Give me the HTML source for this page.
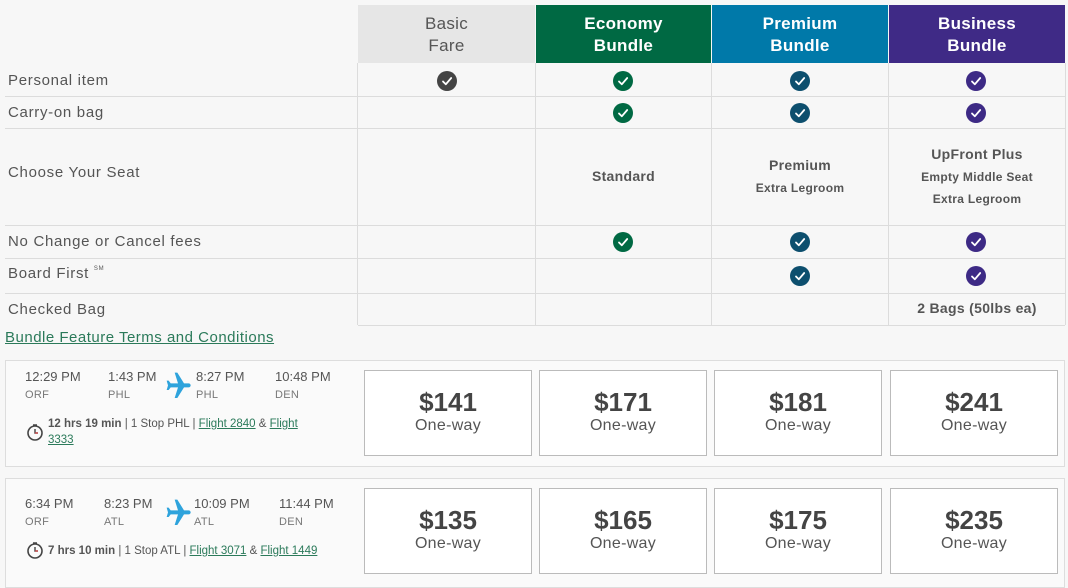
<!DOCTYPE html>
<html><head><meta charset="utf-8"><style>
*{margin:0;padding:0;box-sizing:border-box}
body{width:1068px;height:578px;background:#f7f7f7;font-family:"Liberation Sans",sans-serif;color:#444;position:relative;overflow:hidden}
.a{position:absolute}
.hd{position:absolute;top:5px;height:58px;text-align:center;font-weight:bold;font-size:17px;line-height:22px;padding-top:8px;color:#fff;letter-spacing:.3px}
.lbl{position:absolute;left:8px;font-size:15px;color:#555;letter-spacing:.7px}
.hl{position:absolute;left:5px;width:1060px;height:1px;background:#dcdcdc}
.vl{position:absolute;top:63px;height:262px;width:1px;background:#dcdcdc}
.ck{position:absolute;width:20px;height:20px}
.ct{position:absolute;text-align:center;font-weight:bold;color:#555;letter-spacing:.3px}
.card{position:absolute;left:5px;width:1060px;background:#fafafa;border:1px solid #ddd}
.pb{position:absolute;width:168px;height:86px;border:1px solid #bbb;background:#fff;text-align:center}
.pb b{display:block;font-size:26px;color:#444;margin-top:16px;line-height:30px}
.pb span{display:block;font-size:16px;color:#555;letter-spacing:.3px}
.t{position:absolute;font-size:13px;color:#555}
.c{position:absolute;font-size:11px;color:#777;letter-spacing:.3px}
.info{position:absolute;font-size:11.5px;color:#555;line-height:16px}
.info a{color:#2b7a5a;text-decoration:underline}
</style></head><body>
<div class="hd" style="left:358px;width:177px;background:#e6e6e6;color:#555;font-weight:normal">Basic<br>Fare</div>
<div class="hd" style="left:536px;width:175px;background:#006943">Economy<br>Bundle</div>
<div class="hd" style="left:712px;width:176px;background:#0079a9">Premium<br>Bundle</div>
<div class="hd" style="left:889px;width:176px;background:#3f2a86">Business<br>Bundle</div>

<div class="a" style="left:358px;top:63px;width:707px;height:262px;background:#f7f7f7"></div>
<div class="hl" style="top:96px"></div><div class="hl" style="top:128px"></div><div class="hl" style="top:225px"></div><div class="hl" style="top:258px"></div><div class="hl" style="top:293px"></div><div class="hl" style="top:325px;left:358px;width:707px"></div>
<div class="vl" style="left:357px"></div><div class="vl" style="left:535px"></div><div class="vl" style="left:711px"></div><div class="vl" style="left:888px"></div><div class="vl" style="left:1065px"></div>

<div class="lbl" style="top:72px">Personal item</div>
<div class="lbl" style="top:104px">Carry-on bag</div>
<div class="lbl" style="top:164px">Choose Your Seat</div>
<div class="lbl" style="top:233px">No Change or Cancel fees</div>
<div class="lbl" style="top:265px">Board First <sup style="font-size:6px;vertical-align:8px">SM</sup></div>
<div class="lbl" style="top:301px">Checked Bag</div>
<div class="a" style="left:5px;top:329px;font-size:15px;color:#2b7a5a;text-decoration:underline;letter-spacing:.5px">Bundle Feature Terms and Conditions</div>

<svg width="0" height="0" style="position:absolute"><defs><symbol id="k" viewBox="0 0 20 20"><path d="M6 10.5l2.8 2.8L14.2 7" fill="none" stroke="#fff" stroke-width="1.8" stroke-linecap="round" stroke-linejoin="round"/></symbol></defs></svg>
<svg class="ck" style="left:437px;top:71px" viewBox="0 0 20 20"><circle cx="10" cy="10" r="10" fill="#444"/><use href="#k"/></svg>
<svg class="ck" style="left:613px;top:71px" viewBox="0 0 20 20"><circle cx="10" cy="10" r="10" fill="#006943"/><use href="#k"/></svg>
<svg class="ck" style="left:790px;top:71px" viewBox="0 0 20 20"><circle cx="10" cy="10" r="10" fill="#0d4f6e"/><use href="#k"/></svg>
<svg class="ck" style="left:966px;top:71px" viewBox="0 0 20 20"><circle cx="10" cy="10" r="10" fill="#3d2a85"/><use href="#k"/></svg>
<svg class="ck" style="left:613px;top:103px" viewBox="0 0 20 20"><circle cx="10" cy="10" r="10" fill="#006943"/><use href="#k"/></svg>
<svg class="ck" style="left:790px;top:103px" viewBox="0 0 20 20"><circle cx="10" cy="10" r="10" fill="#0d4f6e"/><use href="#k"/></svg>
<svg class="ck" style="left:966px;top:103px" viewBox="0 0 20 20"><circle cx="10" cy="10" r="10" fill="#3d2a85"/><use href="#k"/></svg>
<svg class="ck" style="left:613px;top:232px" viewBox="0 0 20 20"><circle cx="10" cy="10" r="10" fill="#006943"/><use href="#k"/></svg>
<svg class="ck" style="left:790px;top:232px" viewBox="0 0 20 20"><circle cx="10" cy="10" r="10" fill="#0d4f6e"/><use href="#k"/></svg>
<svg class="ck" style="left:966px;top:232px" viewBox="0 0 20 20"><circle cx="10" cy="10" r="10" fill="#3d2a85"/><use href="#k"/></svg>
<svg class="ck" style="left:790px;top:266px" viewBox="0 0 20 20"><circle cx="10" cy="10" r="10" fill="#0d4f6e"/><use href="#k"/></svg>
<svg class="ck" style="left:966px;top:266px" viewBox="0 0 20 20"><circle cx="10" cy="10" r="10" fill="#3d2a85"/><use href="#k"/></svg>

<div class="ct" style="left:536px;width:175px;top:168px;font-size:14px">Standard</div>
<div class="ct" style="left:712px;width:176px;top:157px;font-size:14px">Premium</div>
<div class="ct" style="left:712px;width:176px;top:181px;font-size:12px">Extra Legroom</div>
<div class="ct" style="left:889px;width:176px;top:146px;font-size:14px">UpFront Plus</div>
<div class="ct" style="left:889px;width:176px;top:170px;font-size:12px">Empty Middle Seat</div>
<div class="ct" style="left:889px;width:176px;top:192px;font-size:12px">Extra Legroom</div>
<div class="ct" style="left:889px;width:176px;top:300px;font-size:14px">2 Bags (50lbs ea)</div>

<div class="card" style="top:360px;height:107px"></div>
<div class="t" style="left:25px;top:369px">12:29 PM</div><div class="c" style="left:25px;top:389px">ORF</div>
<div class="t" style="left:108px;top:369px">1:43 PM</div><div class="c" style="left:108px;top:389px">PHL</div>
<div class="t" style="left:196px;top:369px">8:27 PM</div><div class="c" style="left:196px;top:389px">PHL</div>
<div class="t" style="left:275px;top:369px">10:48 PM</div><div class="c" style="left:275px;top:389px">DEN</div>
<svg class="a" style="left:160px;top:370px" width="32" height="32" viewBox="0 0 24 24"><path d="M21 13v-2l-8-5V2.5c0-.8-.7-1.5-1.5-1.5S10 1.7 10 2.5V6l-8 5v2l8-2.5V16l-2 1.5V19l3.5-1 3.5 1v-1.5L13 16v-5.5z" transform="rotate(90 12 12)" fill="#2ea3dc"/></svg>
<svg class="a" style="left:26px;top:423px" width="18" height="18" viewBox="0 0 18 18"><circle cx="9" cy="10" r="7" fill="none" stroke="#444" stroke-width="1.6"/><path d="M7 2h4M9 6v4h3" stroke="#444" stroke-width="1.4" fill="none"/><path d="M9 10h3" stroke="#d44" stroke-width="1.2"/></svg>
<div class="info" style="left:48px;top:416px;width:270px"><b>12 hrs 19 min</b> | 1 Stop PHL | <a>Flight 2840</a> &amp; <a>Flight 3333</a></div>
<div class="pb" style="left:364px;top:370px"><b>$141</b><span>One-way</span></div>
<div class="pb" style="left:539px;top:370px"><b>$171</b><span>One-way</span></div>
<div class="pb" style="left:714px;top:370px"><b>$181</b><span>One-way</span></div>
<div class="pb" style="left:890px;top:370px"><b>$241</b><span>One-way</span></div>

<div class="card" style="top:478px;height:110px"></div>
<div class="t" style="left:25px;top:496px">6:34 PM</div><div class="c" style="left:25px;top:516px">ORF</div>
<div class="t" style="left:104px;top:496px">8:23 PM</div><div class="c" style="left:104px;top:516px">ATL</div>
<div class="t" style="left:194px;top:496px">10:09 PM</div><div class="c" style="left:194px;top:516px">ATL</div>
<div class="t" style="left:279px;top:496px">11:44 PM</div><div class="c" style="left:279px;top:516px">DEN</div>
<svg class="a" style="left:160px;top:497px" width="32" height="32" viewBox="0 0 24 24"><path d="M21 13v-2l-8-5V2.5c0-.8-.7-1.5-1.5-1.5S10 1.7 10 2.5V6l-8 5v2l8-2.5V16l-2 1.5V19l3.5-1 3.5 1v-1.5L13 16v-5.5z" transform="rotate(90 12 12)" fill="#2ea3dc"/></svg>
<svg class="a" style="left:26px;top:541px" width="18" height="18" viewBox="0 0 18 18"><circle cx="9" cy="10" r="7" fill="none" stroke="#444" stroke-width="1.6"/><path d="M7 2h4M9 6v4h3" stroke="#444" stroke-width="1.4" fill="none"/><path d="M9 10h3" stroke="#d44" stroke-width="1.2"/></svg>
<div class="info" style="left:48px;top:543px;width:300px"><b>7 hrs 10 min</b> | 1 Stop ATL | <a>Flight 3071</a> &amp; <a>Flight 1449</a></div>
<div class="pb" style="left:364px;top:488px"><b>$135</b><span>One-way</span></div>
<div class="pb" style="left:539px;top:488px"><b>$165</b><span>One-way</span></div>
<div class="pb" style="left:714px;top:488px"><b>$175</b><span>One-way</span></div>
<div class="pb" style="left:890px;top:488px"><b>$235</b><span>One-way</span></div>
</body></html>
